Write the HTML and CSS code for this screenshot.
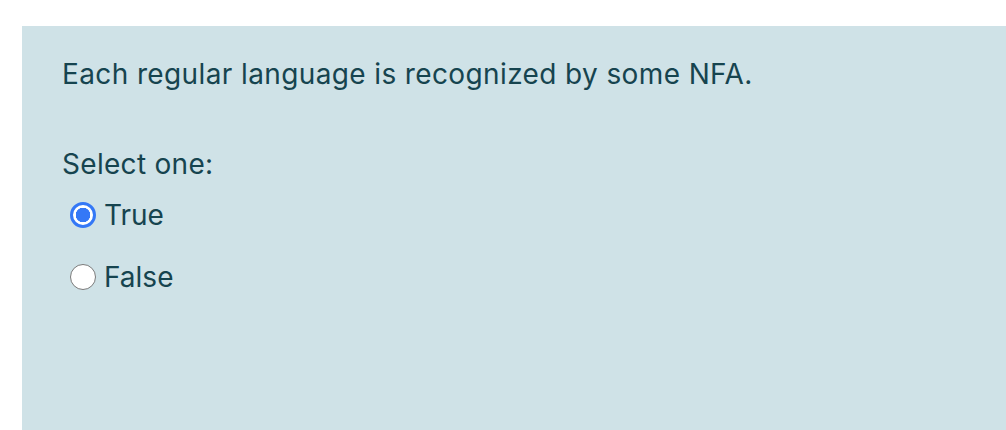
FILE: index.html
```html
<!DOCTYPE html>
<html lang="en">
<head>
    <meta charset="UTF-8">
    <title>Question</title>
    <link rel="stylesheet" href="styles.css">
</head>
<body>
    <div class="formulation">
        <div class="qtext">Each regular language is recognized by some NFA.</div>
        <div class="ablock">
            <div class="prompt">Select one:</div>
            <div class="answer">
                <label class="option">
                    <input type="radio" name="q1" value="1" checked>
                    <span>True</span>
                </label>
                <label class="option">
                    <input type="radio" name="q1" value="0">
                    <span>False</span>
                </label>
            </div>
        </div>
    </div>
</body>
</html>
```

FILE: styles.css
```css
/* Question box */
body {
  margin: 0;
  padding: 26px 0 0 22px;
  font-family: Inter, "Noto Sans", sans-serif;
  background: #fff;
  color: #16444f;
}

.formulation {
  background-color: #cfe2e7;
  padding: 27px 40px 0 40px;
  height: 404px;
  box-sizing: border-box;
  font-size: 28px;
  line-height: 1.5;
}

.qtext {
  margin-bottom: 48px;
  letter-spacing: 0.38px;
}

.prompt {
  margin-bottom: 9px;
  letter-spacing: 0.3px;
}

.option {
  display: flex;
  align-items: center;
  gap: 8px;
  margin-left: 8px;
  height: 42px;
  margin-bottom: 20px;
}

.option input {
  appearance: none;
  margin: 0;
  width: 26px;
  height: 26px;
  border-radius: 50%;
  border: 1.5px solid #7a7a7a;
  background: #fff;
  box-sizing: border-box;
}

.option input:checked {
  border: 3px solid #3478f6;
  background: radial-gradient(circle, #3478f6 0 7px, #fff 7.5px);
}
```
